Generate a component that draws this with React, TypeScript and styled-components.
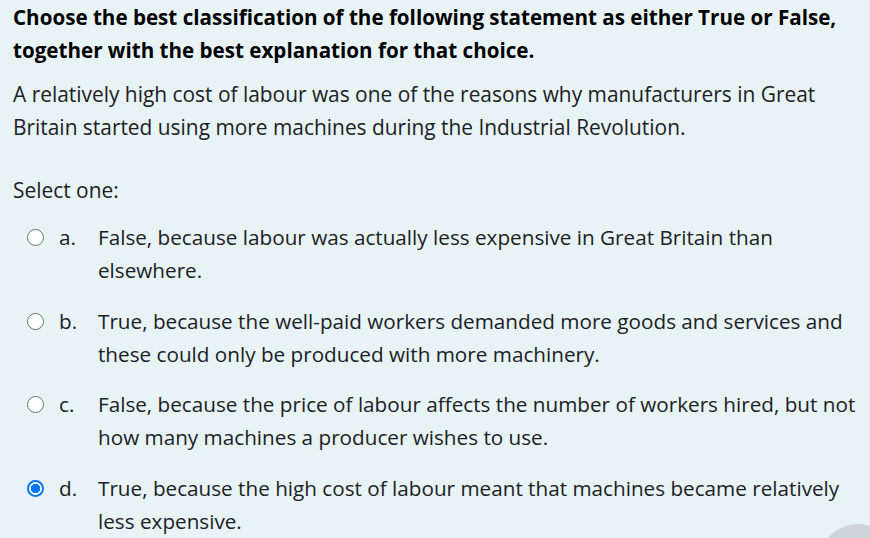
import styled, { createGlobalStyle } from "styled-components";

const GlobalStyle = createGlobalStyle`
  html, body {
    margin: 0;
    padding: 0;
    background: #e7f3f5;
  }
  body {
    font-family: "Open Sans", "Noto Sans", sans-serif;
    color: #1d2125;
    overflow: hidden;
  }
`;

const Page = styled.div`
  position: relative;
  width: 870px;
  height: 538px;
  padding-left: 13px;
  box-sizing: border-box;
  overflow: hidden;
`;

const Prompt = styled.div`
  font-size: 20.6px;
  font-weight: 700;
  line-height: 33px;
  padding-top: 1px;
  color: #000;
`;

const Statement = styled.p`
  font-size: 20.9px;
  line-height: 33px;
  margin: 11px 0 0;
`;

const SelectLabel = styled.div`
  font-size: 20.9px;
  line-height: 33px;
  margin-top: 30px;
`;

const Options = styled.div`
  display: flex;
  flex-direction: column;
  gap: 17.7px;
  margin-top: 14px;
`;

const Option = styled.label`
  display: flex;
  align-items: flex-start;
  font-size: 20.7px;
  line-height: 33px;
`;

const Radio = styled.span<{ checked?: boolean }>`
  flex: none;
  width: 17px;
  height: 17px;
  margin: 8px 0 0 14px;
  box-sizing: border-box;
  border-radius: 50%;
  border: 2px solid ${(p) => (p.checked ? "#0075ff" : "#6f6f6f")};
  border-width: ${(p) => (p.checked ? "2px" : "1.5px")};
  background: ${(p) =>
    p.checked
      ? "radial-gradient(circle, #0075ff 0 4.5px, #fff 5px)"
      : "#fff"};
`;

const Letter = styled.span`
  flex: none;
  width: 54px;
  padding-left: 15px;
  box-sizing: border-box;
`;

const Text = styled.span`
  flex: 1;
`;

const FloatButton = styled.div`
  position: absolute;
  left: 819px;
  top: 524px;
  width: 78px;
  height: 78px;
  border-radius: 50%;
  background: #ced4da;
`;

const options = [
  {
    letter: "a.",
    text: "False, because labour was actually less expensive in Great Britain than elsewhere.",
  },
  {
    letter: "b.",
    text: "True, because the well-paid workers demanded more goods and services and these could only be produced with more machinery.",
  },
  {
    letter: "c.",
    text: "False, because the price of labour affects the number of workers hired, but not how many machines a producer wishes to use.",
  },
  {
    letter: "d.",
    text: "True, because the high cost of labour meant that machines became relatively less expensive.",
    checked: true,
  },
];

export default function App() {
  return (
    <>
      <GlobalStyle />
      <Page>
        <Prompt>
          Choose the best classification of the following statement as either
          True or False, together with the best explanation for that choice.
        </Prompt>
        <Statement>
          A relatively high cost of labour was one of the reasons why
          manufacturers in Great Britain started using more machines during the
          Industrial Revolution.
        </Statement>
        <SelectLabel>Select one:</SelectLabel>
        <Options>
          {options.map((o) => (
            <Option key={o.letter}>
              <Radio checked={o.checked} />
              <Letter>{o.letter}</Letter>
              <Text>{o.text}</Text>
            </Option>
          ))}
        </Options>
        <FloatButton />
      </Page>
    </>
  );
}
